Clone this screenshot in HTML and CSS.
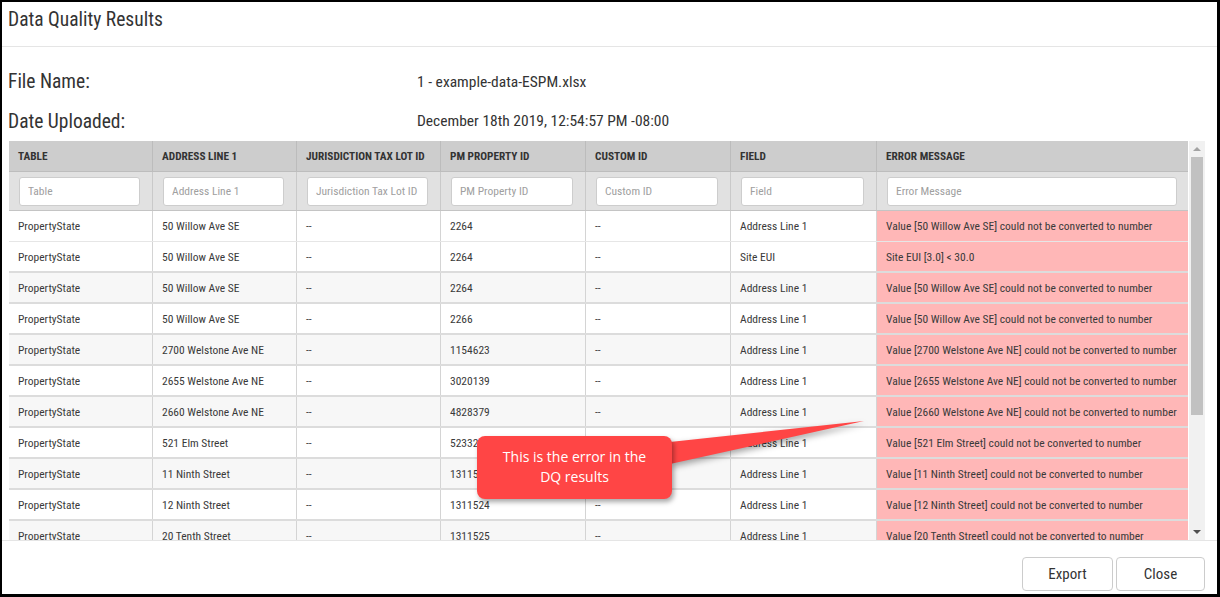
FILE: index.html
```html
<!DOCTYPE html>
<html lang="en">
<head>
<meta charset="utf-8">
<title>Data Quality Results</title>
<link rel="stylesheet" href="styles.css">
</head>
<body>
<div class="dialog">
  <div class="modal-header">
    <h3 class="modal-title">Data Quality Results</h3>
  </div>
  <div class="modal-body">
    <div class="info">
      <div class="info-label">File Name:</div>
      <div class="info-value">1 - example-data-ESPM.xlsx</div>
      <div class="info-label">Date Uploaded:</div>
      <div class="info-value">December 18th 2019, 12:54:57 PM -08:00</div>
    </div>
    <div class="grid-wrap">
      <div class="grid">
        <div class="row head">
          <div class="cell">Table</div>
          <div class="cell">Address Line 1</div>
          <div class="cell">Jurisdiction Tax Lot ID</div>
          <div class="cell">PM Property ID</div>
          <div class="cell">Custom ID</div>
          <div class="cell">Field</div>
          <div class="cell">Error Message</div>
        </div>
        <div class="row filters">
          <div class="cell"><input class="filter" placeholder="Table"></div>
          <div class="cell"><input class="filter" placeholder="Address Line 1"></div>
          <div class="cell"><input class="filter" placeholder="Jurisdiction Tax Lot ID"></div>
          <div class="cell"><input class="filter" placeholder="PM Property ID"></div>
          <div class="cell"><input class="filter" placeholder="Custom ID"></div>
          <div class="cell"><input class="filter" placeholder="Field"></div>
          <div class="cell"><input class="filter" placeholder="Error Message"></div>
        </div>
        <div class="rows">
          <div class="row data first">
            <div class="cell">PropertyState</div><div class="cell">50 Willow Ave SE</div><div class="cell">--</div><div class="cell">2264</div><div class="cell">--</div><div class="cell">Address Line 1</div><div class="cell err">Value [50 Willow Ave SE] could not be converted to number</div>
          </div>
          <div class="row data">
            <div class="cell">PropertyState</div><div class="cell">50 Willow Ave SE</div><div class="cell">--</div><div class="cell">2264</div><div class="cell">--</div><div class="cell">Site EUI</div><div class="cell err">Site EUI [3.0] &lt; 30.0</div>
          </div>
          <div class="row data alt">
            <div class="cell">PropertyState</div><div class="cell">50 Willow Ave SE</div><div class="cell">--</div><div class="cell">2264</div><div class="cell">--</div><div class="cell">Address Line 1</div><div class="cell err">Value [50 Willow Ave SE] could not be converted to number</div>
          </div>
          <div class="row data">
            <div class="cell">PropertyState</div><div class="cell">50 Willow Ave SE</div><div class="cell">--</div><div class="cell">2266</div><div class="cell">--</div><div class="cell">Address Line 1</div><div class="cell err">Value [50 Willow Ave SE] could not be converted to number</div>
          </div>
          <div class="row data alt">
            <div class="cell">PropertyState</div><div class="cell">2700 Welstone Ave NE</div><div class="cell">--</div><div class="cell">1154623</div><div class="cell">--</div><div class="cell">Address Line 1</div><div class="cell err">Value [2700 Welstone Ave NE] could not be converted to number</div>
          </div>
          <div class="row data">
            <div class="cell">PropertyState</div><div class="cell">2655 Welstone Ave NE</div><div class="cell">--</div><div class="cell">3020139</div><div class="cell">--</div><div class="cell">Address Line 1</div><div class="cell err">Value [2655 Welstone Ave NE] could not be converted to number</div>
          </div>
          <div class="row data alt">
            <div class="cell">PropertyState</div><div class="cell">2660 Welstone Ave NE</div><div class="cell">--</div><div class="cell">4828379</div><div class="cell">--</div><div class="cell">Address Line 1</div><div class="cell err">Value [2660 Welstone Ave NE] could not be converted to number</div>
          </div>
          <div class="row data">
            <div class="cell">PropertyState</div><div class="cell">521 Elm Street</div><div class="cell">--</div><div class="cell">5233234</div><div class="cell">--</div><div class="cell">Address Line 1</div><div class="cell err">Value [521 Elm Street] could not be converted to number</div>
          </div>
          <div class="row data alt">
            <div class="cell">PropertyState</div><div class="cell">11 Ninth Street</div><div class="cell">--</div><div class="cell">1311523</div><div class="cell">--</div><div class="cell">Address Line 1</div><div class="cell err">Value [11 Ninth Street] could not be converted to number</div>
          </div>
          <div class="row data">
            <div class="cell">PropertyState</div><div class="cell">12 Ninth Street</div><div class="cell">--</div><div class="cell">1311524</div><div class="cell">--</div><div class="cell">Address Line 1</div><div class="cell err">Value [12 Ninth Street] could not be converted to number</div>
          </div>
          <div class="row data alt">
            <div class="cell">PropertyState</div><div class="cell">20 Tenth Street</div><div class="cell">--</div><div class="cell">1311525</div><div class="cell">--</div><div class="cell">Address Line 1</div><div class="cell err">Value [20 Tenth Street] could not be converted to number</div>
          </div>
        </div>
      </div>
      <div class="scrollbar">
        <div class="sb-arrow up"></div>
        <div class="sb-track"><div class="sb-thumb"></div></div>
        <div class="sb-arrow down"></div>
      </div>
    </div>
  </div>
  <div class="modal-footer">
    <button class="btn btn-export">Export</button>
    <button class="btn btn-close">Close</button>
  </div>

  <svg class="callout-tail" width="220" height="60" viewBox="0 0 220 60">
    <polygon points="8,27 202,6 8,49" fill="#ff4545"/>
  </svg>
  <div class="callout">This is the error in the<br>DQ results</div>
</div>
</body>
</html>
```

FILE: styles.css
```css
* { box-sizing: border-box; }
html, body { margin: 0; padding: 0; }
body {
  background: #000;
  font-family: "Roboto Condensed", "Roboto", "Liberation Sans", sans-serif;
  color: #333;
}
.dialog {
  position: relative;
  width: 1220px;
  height: 597px;
  background: #fff;
  border-style: solid;
  border-color: #000;
  border-width: 2px 3px 3px 2px;
  display: flex;
  flex-direction: column;
  overflow: hidden;
}
.modal-header {
  height: 45px;
  flex: none;
  border-bottom: 1px solid #e5e5e5;
  padding: 7px 6px 0;
}
.modal-title {
  margin: 0;
  font-size: 19.5px;
  line-height: 22px;
  font-weight: normal;
  color: #333;
}
.modal-body {
  flex: none;
  padding: 15px 12px 0 7px;
}
.info {
  display: grid;
  grid-template-columns: 408px 1fr;
  grid-template-rows: 39px 40px;
  align-items: center;
}
.info-label {
  font-size: 19.5px;
  margin-left: -1px;
  color: #333;
}
.info-value {
  font-size: 15.5px;
  color: #333;
}
.grid-wrap {
  display: flex;
  height: 399px;
}
.grid {
  width: 1180px;
  overflow: hidden;
  display: flex;
  flex-direction: column;
}
.rows {
  flex: 1;
  overflow: hidden;
}
.row {
  display: grid;
  grid-template-columns: 144px 144px 144px 145px 145px 146px 312px;
}
.cell {
  display: flex;
  align-items: center;
  padding-left: 9px;
  border-right: 1px solid #d4d4d4;
  font-size: 11.5px;
  white-space: nowrap;
  overflow: hidden;
}
.cell:last-child { border-right: none; }
.head {
  height: 31px;
  background: #cdcdcd;
  border-bottom: 1px solid #bdbdbd;
}
.head .cell {
  font-weight: bold;
  text-transform: uppercase;
  color: #333;
  border-right-color: #bcbcbc;
  font-size: 11.3px;
}
.filters {
  height: 39px;
  background: #e1e1e1;
  border-bottom: 1px solid #c4c4c4;
}
.filters .cell {
  padding: 0 12px 0 10px;
  border-right-color: #c9c9c9;
}
.filter {
  width: 100%;
  height: 29px;
  border: 1px solid #cdcdcd;
  border-radius: 3px;
  background: #fff;
  padding: 0 8px;
  font-family: inherit;
  font-size: 11.5px;
  color: #333;
  outline: none;
}
.filter::placeholder { color: #a0a0a0; }
.data {
  height: 31px;
  background: #fff;
  border-bottom: 2px solid #dcdcdc;
}
.data.first {
  border-bottom: 1px solid #e6e6e6;
}
.data.alt { background: #f7f7f7; }
.data .cell { color: #3a3a3a; }
.data .cell.err { background: #ffb7b7; }
.scrollbar {
  width: 16px;
  margin-left: 1px;
  background: #f1f1f1;
  display: flex;
  flex-direction: column;
  align-items: center;
}
.sb-arrow {
  height: 16px;
  width: 100%;
  flex: none;
  position: relative;
}
.sb-arrow::after {
  content: "";
  position: absolute;
  left: 4px;
  border-left: 4px solid transparent;
  border-right: 4px solid transparent;
}
.sb-arrow.up::after { top: 6px; border-bottom: 4px solid #a3a3a3; }
.sb-arrow.down::after { top: 6px; border-top: 4px solid #505050; }
.sb-track {
  flex: 1;
  width: 100%;
  padding: 0 2px;
}
.sb-thumb {
  height: 258px;
  background: #c1c1c1;
}
.modal-footer {
  flex: 1;
  border-top: 1px solid #e5e5e5;
  display: flex;
  justify-content: flex-end;
  align-items: flex-start;
  gap: 3px;
  padding: 16px 12px 0 0;
}
.btn {
  height: 34px;
  border: 1px solid #cccccc;
  border-radius: 4px;
  background: #fff;
  color: #333;
  font-family: inherit;
  font-size: 15px;
  padding: 0;
}
.btn-export { width: 91px; }
.btn-close { width: 89px; }
.callout-tail {
  position: absolute;
  left: 660px;
  top: 413px;
  filter: drop-shadow(2px 3px 3px rgba(0,0,0,.35));
}
.callout {
  position: absolute;
  left: 475px;
  top: 434px;
  width: 195px;
  height: 63px;
  background: #ff4545;
  border-radius: 8px;
  box-shadow: 2px 3px 5px rgba(0,0,0,.35);
  color: #fff;
  font-family: "Open Sans", sans-serif;
  font-size: 14px;
  line-height: 20px;
  text-align: center;
  padding-top: 11px;
}
```
